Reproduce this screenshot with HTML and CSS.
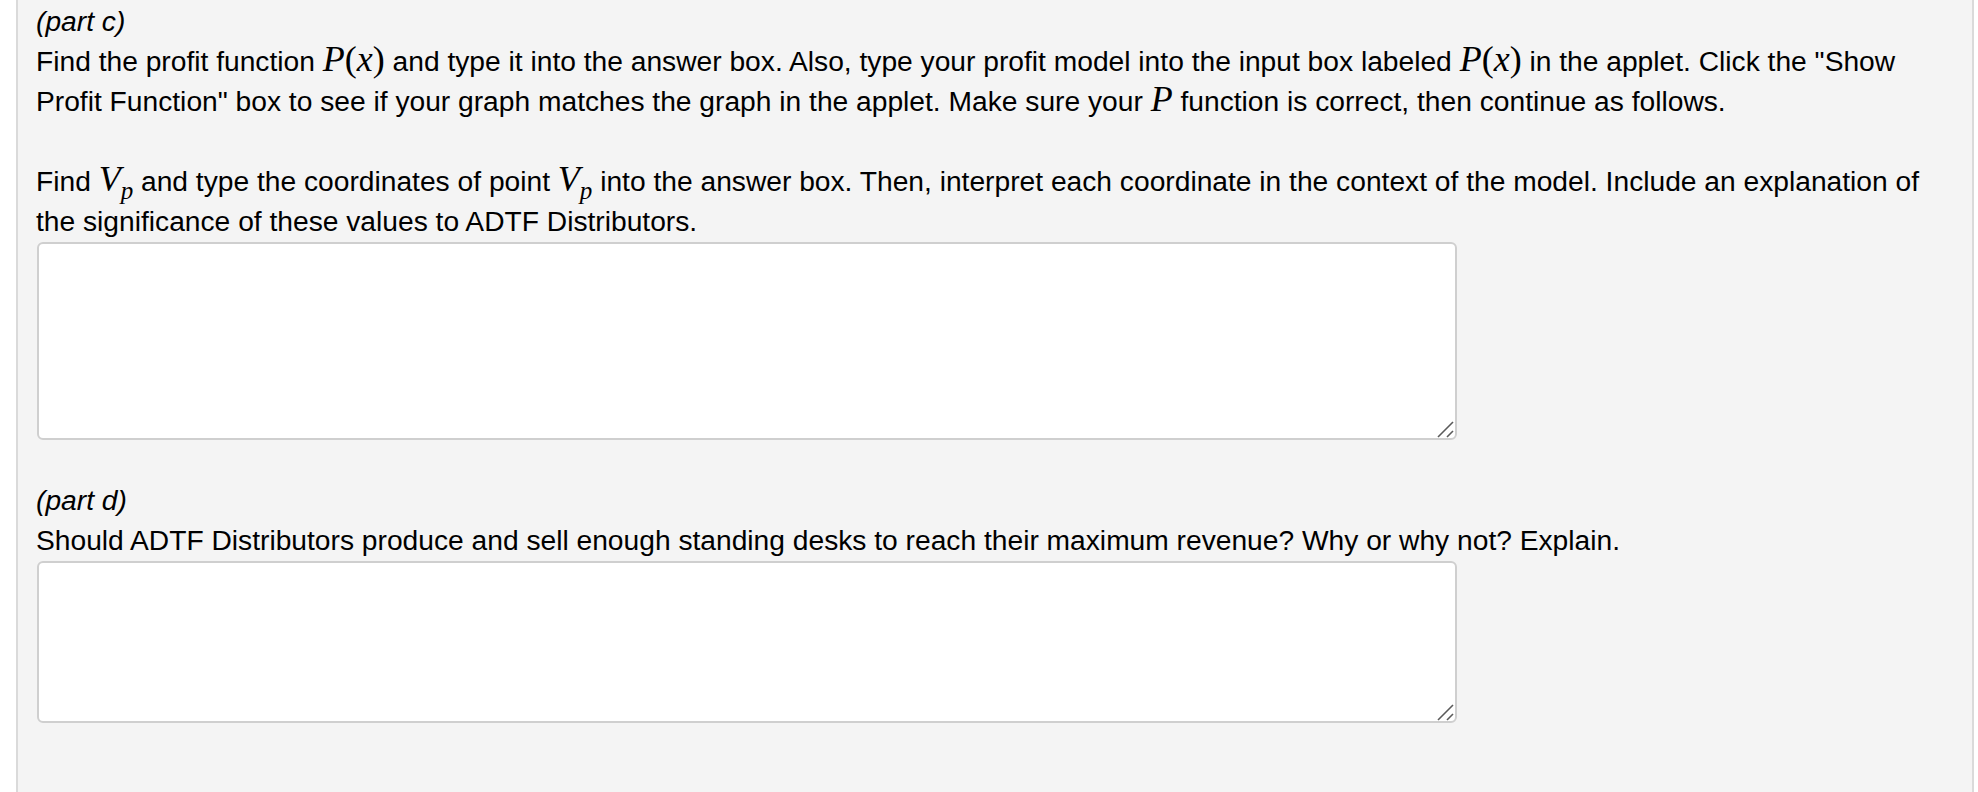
FILE: index.html
```html
<!DOCTYPE html>
<html>
<head>
<meta charset="utf-8">
<link rel="stylesheet" href="styles.css">
</head>
<body>
<div class="panel">
  <div class="part">
    <div class="label">(part c)</div>
    <div class="text">Find the profit function <span class="m"><i>P</i>(<i>x</i>)</span> and type it into the answer box. Also, type your profit model into the input box labeled <span class="m"><i>P</i>(<i>x</i>)</span> in the applet. Click the "Show Profit Function" box to see if your graph matches the graph in the applet. Make sure your <span class="m"><i class="b">P</i></span> function is correct, then continue as follows.</div>
    <div class="text para">Find <span class="m"><i>V</i><sub><i>p</i></sub></span> and type the coordinates of point <span class="m"><i>V</i><sub><i>p</i></sub></span> into the answer box. Then, interpret each coordinate in the context of the model. Include an explanation of the significance of these values to ADTF Distributors.</div>
    <div class="box">
      <textarea class="answer tall"></textarea>
      <svg class="grip" width="18" height="18" viewBox="0 0 18 18"><line x1="1" y1="17" x2="16" y2="2"/><line x1="10" y1="17" x2="16" y2="11"/></svg>
    </div>
  </div>
  <div class="part second">
    <div class="label">(part d)</div>
    <div class="text">Should ADTF Distributors produce and sell enough standing desks to reach their maximum revenue? Why or why not? Explain.</div>
    <div class="box">
      <textarea class="answer short"></textarea>
      <svg class="grip" width="18" height="18" viewBox="0 0 18 18"><line x1="1" y1="17" x2="16" y2="2"/><line x1="10" y1="17" x2="16" y2="11"/></svg>
    </div>
  </div>
</div>
</body>
</html>
```

FILE: styles.css
```css
html, body {
  margin: 0;
  padding: 0;
  background: #ffffff;
}
body {
  font-family: "Liberation Sans", Arial, Helvetica, sans-serif;
  color: #000;
}
.panel {
  margin-left: 16px;
  width: 1958px;
  box-sizing: border-box;
  min-height: 792px;
  background: #f4f4f4;
  border-left: 2px solid #dadada;
  border-right: 2px solid #dadada;
  padding: 1px 12px 0 18px;
}
.part {
  display: flex;
  flex-direction: column;
  align-items: stretch;
}
.second {
  margin-top: 40px;
}
.label {
  font-size: 28.2px;
  line-height: 40px;
  font-style: italic;
}
.text {
  font-size: 28.2px;
  line-height: 40px;
}
.para {
  margin-top: 40px;
}
.m {
  font-family: "Liberation Serif", "Times New Roman", serif;
  font-size: 36px;
  line-height: 0;
}
.m sub {
  font-size: 25px;
  vertical-align: -8px;
  line-height: 0;
}
.box {
  position: relative;
  width: 1420px;
  margin: 1px 0 0 1px;
}
.answer {
  display: block;
  box-sizing: border-box;
  width: 100%;
  background: #fff;
  border: 2px solid #cfcfcf;
  border-radius: 6px;
  resize: none;
  outline: none;
  padding: 6px;
}
.tall {
  height: 198px;
}
.short {
  height: 162px;
}
.grip {
  position: absolute;
  right: 2px;
  bottom: 2px;
  stroke: #5a5a5a;
  stroke-width: 1.6;
}
```
